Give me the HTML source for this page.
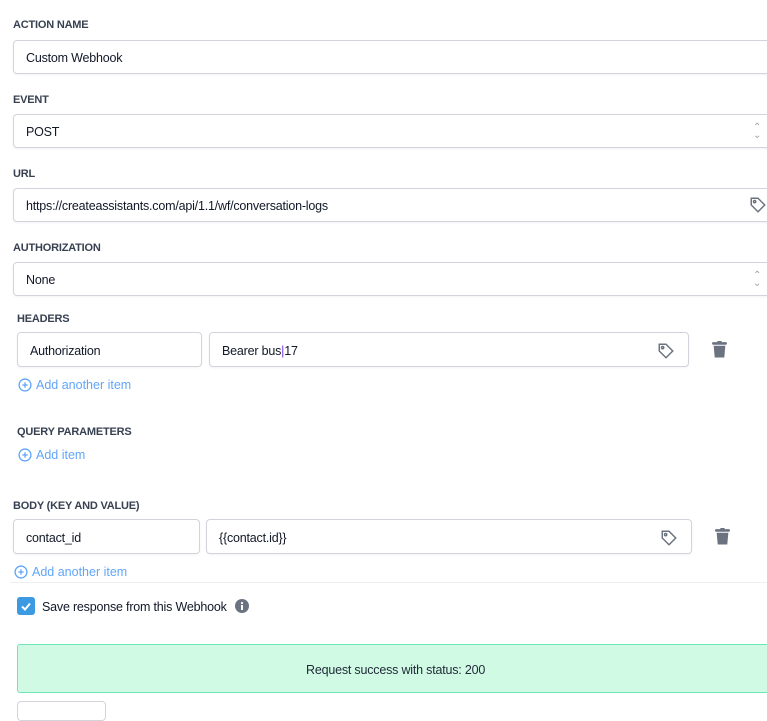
<!DOCTYPE html>
<html><head><style>
body{margin:0;width:767px;height:711px;overflow:hidden;background:#fff;font-family:"Liberation Sans",sans-serif;color:#1f2937;position:relative}
.l{position:absolute;font-size:11px;font-weight:bold;color:#374151;letter-spacing:-0.2px}
.i{position:absolute;box-sizing:border-box;border:1px solid #d1d5db;border-radius:4px;background:#fff;font-size:12.5px;color:#111827;padding-left:12px;padding-top:2px;display:flex;align-items:center;box-shadow:0 1px 2px rgba(0,0,0,.05);letter-spacing:-0.2px}
.a{position:absolute;font-size:12.5px;color:#60a5fa;display:flex;align-items:center;gap:4px}
.t{position:absolute}
.ar{position:absolute;left:739px;top:9px;font-size:10px;line-height:8px;color:#9ca3af}
</style></head><body>
<div class="l" style="left:13px;top:19px">ACTION NAME</div>
<div class="i" style="left:13px;top:40px;width:770px;height:34px">Custom Webhook</div>
<div class="l" style="left:13px;top:94px">EVENT</div>
<div class="i" style="left:13px;top:114px;width:770px;height:34px">POST<span class="ar">⌃<br>⌄</span></div>
<div class="l" style="left:13px;top:168px">URL</div>
<div class="i" style="left:13px;top:188px;width:770px;height:34px">https://createassistants.com/api/1.1/wf/conversation-logs
<svg style="position:absolute;left:735px;top:7px" width="18" height="18" viewBox="0 0 16 16" fill="none" stroke="#6b7280" stroke-width="1.3"><path d="M2 2h6l6 6-6 6-6-6z"/><circle cx="5" cy="5" r="1"/></svg></div>
<div class="l" style="left:13px;top:242px">AUTHORIZATION</div>
<div class="i" style="left:13px;top:262px;width:770px;height:34px">None<span class="ar">⌃<br>⌄</span></div>
<div class="l" style="left:17px;top:313px">HEADERS</div>
<div class="i" style="left:17px;top:332px;width:185px;height:35px">Authorization</div>
<div class="i" style="left:209px;top:332px;width:480px;height:35px">Bearer bus<span style="color:#7c3aed">|</span>17
<svg style="position:absolute;left:447px;top:9px" width="18" height="18" viewBox="0 0 16 16" fill="none" stroke="#6b7280" stroke-width="1.3"><path d="M2 2h6l6 6-6 6-6-6z"/><circle cx="5" cy="5" r="1"/></svg></div>
<svg class="t" style="left:712px;top:341px" width="15" height="17" viewBox="0 0 14 16" fill="#6b7280"><rect x="0" y="1" width="14" height="2.5" rx="1"/><rect x="5" y="0" width="4" height="2"/><path d="M1.5 4.5h11l-1 11h-9z"/></svg>
<div class="a" style="left:18px;top:378px"><svg width="14" height="14" viewBox="0 0 13 13" fill="none" stroke="#60a5fa" stroke-width="1.2"><circle cx="6.5" cy="6.5" r="5.5"/><path d="M6.5 4v5M4 6.5h5"/></svg>Add another item</div>
<div class="l" style="left:17px;top:426px">QUERY PARAMETERS</div>
<div class="a" style="left:18px;top:448px"><svg width="14" height="14" viewBox="0 0 13 13" fill="none" stroke="#60a5fa" stroke-width="1.2"><circle cx="6.5" cy="6.5" r="5.5"/><path d="M6.5 4v5M4 6.5h5"/></svg>Add item</div>
<div class="l" style="left:13px;top:500px">BODY (KEY AND VALUE)</div>
<div class="i" style="left:13px;top:519px;width:187px;height:35px">contact_id</div>
<div class="i" style="left:206px;top:519px;width:486px;height:35px">{{contact.id}}
<svg style="position:absolute;left:453px;top:9px" width="18" height="18" viewBox="0 0 16 16" fill="none" stroke="#6b7280" stroke-width="1.3"><path d="M2 2h6l6 6-6 6-6-6z"/><circle cx="5" cy="5" r="1"/></svg></div>
<svg class="t" style="left:715px;top:528px" width="15" height="17" viewBox="0 0 14 16" fill="#6b7280"><rect x="0" y="1" width="14" height="2.5" rx="1"/><rect x="5" y="0" width="4" height="2"/><path d="M1.5 4.5h11l-1 11h-9z"/></svg>
<div class="a" style="left:14px;top:565px"><svg width="14" height="14" viewBox="0 0 13 13" fill="none" stroke="#60a5fa" stroke-width="1.2"><circle cx="6.5" cy="6.5" r="5.5"/><path d="M6.5 4v5M4 6.5h5"/></svg>Add another item</div>
<div class="t" style="left:10px;top:582px;width:760px;height:1px;background:#eceef1"></div>
<div class="t" style="left:17px;top:597px;width:18px;height:18px;border-radius:3px;background:#3b9ae1"><svg width="18" height="18" viewBox="0 0 18 18" fill="none" stroke="#fff" stroke-width="2"><path d="M5 9.5l3 3 5-6"/></svg></div>
<div class="t" style="left:42px;top:600px;font-size:12.5px;color:#111827;letter-spacing:-0.2px">Save response from this Webhook</div>
<svg class="t" style="left:235px;top:599px" width="14" height="14" viewBox="0 0 14 14"><circle cx="7" cy="7" r="7" fill="#6b7280"/><rect x="6" y="6" width="2" height="5" fill="#fff"/><circle cx="7" cy="4" r="1.1" fill="#fff"/></svg>
<div class="t" style="left:17px;top:644px;width:770px;height:49px;box-sizing:border-box;background:#d1fae5;border:1px solid #6ee7b7;border-radius:3px;font-size:12.5px;color:#1f2937;display:flex;align-items:center;padding-left:288px;padding-top:2px;letter-spacing:-0.2px">Request success with status: 200</div>
<div class="t" style="left:17px;top:701px;width:89px;height:20px;box-sizing:border-box;border:1px solid #d1d5db;border-radius:4px"></div>
</body></html>
